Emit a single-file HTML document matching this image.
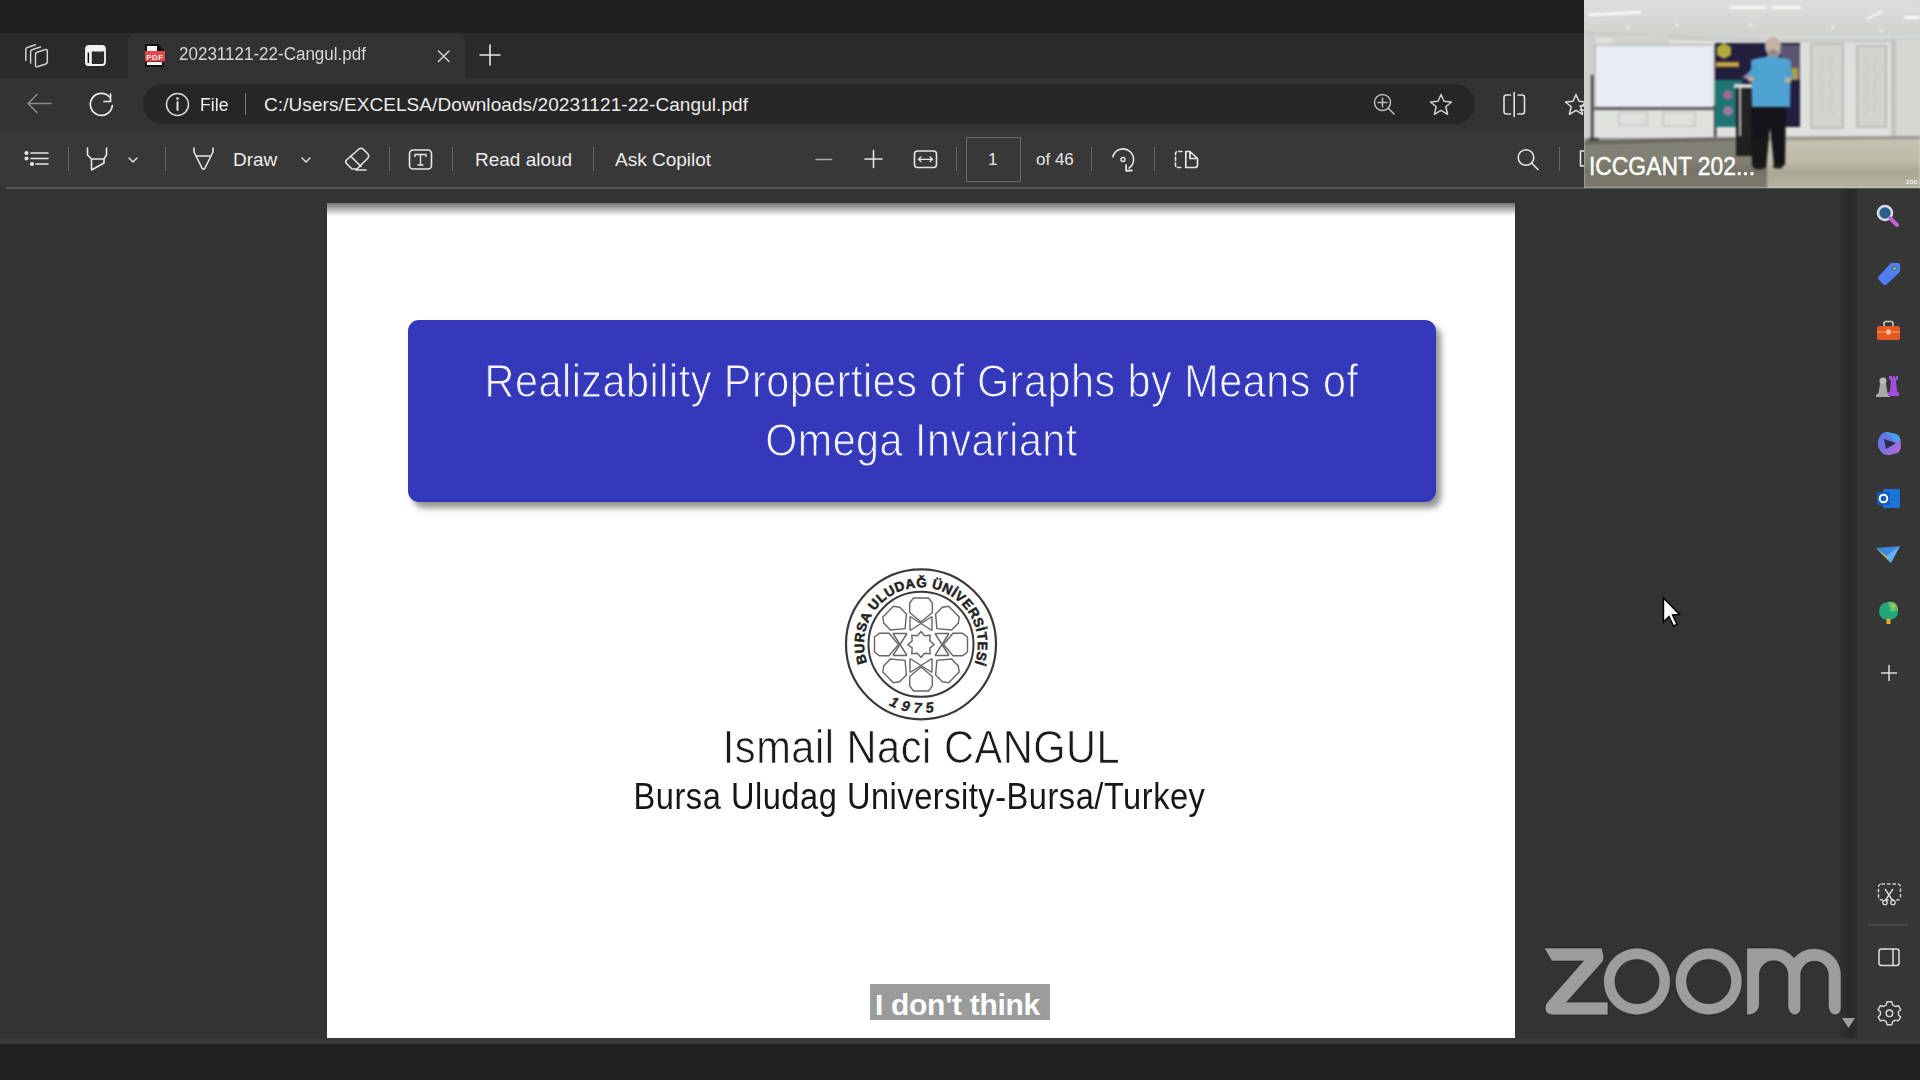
<!DOCTYPE html>
<html><head><meta charset="utf-8">
<style>
*{margin:0;padding:0;box-sizing:border-box}
html,body{width:1920px;height:1080px;overflow:hidden;background:#333;font-family:"Liberation Sans",sans-serif}
.abs{position:absolute}
#titlebar{left:0;top:0;width:1920px;height:33px;background:#1f1f1f}
#tabstrip{left:0;top:33px;width:1920px;height:45px;background:#2a2a2a}
#tab{left:128px;top:33px;width:337px;height:45px;background:#323232;border-radius:8px 8px 0 0}
#addrrow{left:0;top:78px;width:1920px;height:53px;background:#333333}
#pill{left:143px;top:84px;width:1332px;height:40px;background:#262626;border-radius:20px}
#toolrow{left:0;top:131px;width:1920px;height:57px;background:#383838}
#toolline{left:6px;top:187px;width:1914px;height:2px;background:#555555}
#main{left:0;top:189px;width:1920px;height:855px;background:#333}
#band{left:0;top:1038px;width:1920px;height:6px;background:#383838}
#sidebar{left:1857px;top:189px;width:63px;height:849px;background:#363636}
#sbshade{left:1838px;top:189px;width:19px;height:849px;background:linear-gradient(90deg,rgba(0,0,0,0),rgba(0,0,0,0.22) 70%,rgba(0,0,0,0.12))}
#bottom{left:0;top:1044px;width:1920px;height:36px;background:#212121}
#page{left:327px;top:203px;width:1188px;height:835px;background:#fff}
.t{position:absolute;color:#e6e6e6;white-space:nowrap;line-height:1}
.sep{position:absolute;width:1px;background:#666}
svg{position:absolute;overflow:visible}
#video{left:1584px;top:0;width:336px;height:188px;background:#d8d8d4;overflow:hidden}
#video svg{filter:blur(0.9px)}
#video svg.nb{filter:none}
.ctr{position:absolute;left:0;width:1843px;text-align:center;white-space:nowrap;line-height:1;transform-origin:921.5px 0}
</style></head><body>
<div id="titlebar" class="abs"></div>
<div id="tabstrip" class="abs"></div>
<div id="tab" class="abs"></div>
<div id="addrrow" class="abs"></div>
<div id="pill" class="abs"></div>
<div id="toolrow" class="abs"></div>
<div id="toolline" class="abs"></div>
<div id="main" class="abs"></div>
<div id="sbshade" class="abs"></div>
<div id="sidebar" class="abs"></div>
<div id="bottom" class="abs"></div>
<div id="band" class="abs"></div>
<div id="page" class="abs"><div style="position:absolute;left:0;top:0;width:100%;height:13px;background:linear-gradient(#707070,rgba(255,255,255,0))"></div></div>

<!-- tab strip content -->
<div class="t" style="left:179px;top:45px;font-size:18px;color:#d6d6d6;transform:scaleX(0.945);transform-origin:0 0">20231121-22-Cangul.pdf</div>
<div class="t" style="left:200px;top:94.5px;font-size:19px;color:#f0f0f0;transform:scaleX(0.93);transform-origin:0 0">File</div>
<div class="sep" style="left:245px;top:93px;height:22px;background:#777"></div>
<div class="t" style="left:264px;top:94.5px;font-size:19px;color:#ececec;letter-spacing:0.08px">C:/Users/EXCELSA/Downloads/20231121-22-Cangul.pdf</div>

<!-- toolbar text -->
<div class="t" style="left:233px;top:149.5px;font-size:19px;color:#ececec">Draw</div>
<div class="t" style="left:475px;top:149.5px;font-size:19px;color:#ececec">Read aloud</div>
<div class="t" style="left:615px;top:149.5px;font-size:19px;color:#ececec">Ask Copilot</div>
<div class="abs" style="left:966px;top:137px;width:55px;height:45px;border:1px solid #6a6a6a;background:#383838"></div>
<div class="t" style="left:988px;top:151px;font-size:17px">1</div>
<div class="t" style="left:1036px;top:151px;font-size:17px">of 46</div>
<div class="sep" style="left:68px;top:147px;height:24px"></div>
<div class="sep" style="left:165px;top:147px;height:24px"></div>
<div class="sep" style="left:389px;top:147px;height:24px"></div>
<div class="sep" style="left:452px;top:147px;height:24px"></div>
<div class="sep" style="left:593px;top:147px;height:24px"></div>
<div class="sep" style="left:956px;top:147px;height:24px"></div>
<div class="sep" style="left:1091px;top:147px;height:24px"></div>
<div class="sep" style="left:1154px;top:147px;height:24px"></div>
<div class="sep" style="left:1559px;top:147px;height:24px"></div>


<!-- slide -->
<div class="abs" style="left:407.5px;top:319.5px;width:1028px;height:182.5px;background:#3438bb;border-radius:11px;box-shadow:5px 6px 6px rgba(100,105,100,0.7)"></div>
<div class="ctr" style="top:356.8px;font-size:47px;color:#f4f4ff;transform:scaleX(0.879);letter-spacing:0.6px;-webkit-text-stroke:1px #3438bd">Realizability Properties of Graphs by Means of</div>
<div class="ctr" style="top:416.2px;font-size:47px;color:#f4f4ff;transform:scaleX(0.877);letter-spacing:0.6px;-webkit-text-stroke:1px #3438bd">Omega Invariant</div>
<div class="ctr" style="top:724.4px;font-size:46px;color:#1a1a1a;transform:scaleX(0.903);letter-spacing:0.6px;-webkit-text-stroke:0.7px #fff">Ismail Naci CANGUL</div>
<div class="ctr" style="top:778.8px;font-size:36.3px;color:#161616;transform:scaleX(0.897);left:-2px;letter-spacing:0.6px">Bursa Uludag University-Bursa/Turkey</div>

<svg class="abs" style="left:0;top:0" width="1920" height="1080">
<defs>
<path id="arcTop" d="M869.3,668.4 A57,57 0 1 1 970.4,672.8"/>
<path id="arcBot" d="M888.6,704.9 A69,69 0 0 0 953.4,704.9"/>
</defs>
<circle cx="921" cy="644.3" r="75" fill="none" stroke="#3a3a3a" stroke-width="2.2"/>
<circle cx="921" cy="644.3" r="52.5" fill="none" stroke="#3a3a3a" stroke-width="2"/>
<g fill="none" stroke="#666" stroke-width="1.4"><polygon points="921.0,622.0 932.3,612.5 932.3,603.0 928.5,598.0 913.5,598.0 909.7,603.0 909.7,612.5"/><polygon points="936.9,628.6 951.6,629.9 958.3,623.1 959.2,616.9 948.6,606.3 942.4,607.2 935.6,613.9"/><polygon points="943.5,644.5 953.0,655.8 962.5,655.8 967.5,652.0 967.5,637.0 962.5,633.2 953.0,633.2"/><polygon points="936.9,660.4 935.6,675.1 942.4,681.8 948.6,682.7 959.2,672.1 958.3,665.9 951.6,659.1"/><polygon points="921.0,667.0 909.7,676.5 909.7,686.0 913.5,691.0 928.5,691.0 932.3,686.0 932.3,676.5"/><polygon points="905.1,660.4 890.4,659.1 883.7,665.9 882.8,672.1 893.4,682.7 899.6,681.8 906.4,675.1"/><polygon points="898.5,644.5 889.0,633.2 879.5,633.2 874.5,637.0 874.5,652.0 879.5,655.8 889.0,655.8"/><polygon points="905.1,628.6 906.4,613.9 899.6,607.2 893.4,606.3 882.8,616.9 883.7,623.1 890.4,629.9"/><path d="M910.0,616.5 L910.0,630.5 M932.0,616.5 L932.0,630.5 M910.0,616.5 L932.0,630.5 M932.0,616.5 L910.0,630.5"/><path d="M949.0,633.5 L935.0,633.5 M949.0,655.5 L935.0,655.5 M949.0,633.5 L935.0,655.5 M949.0,655.5 L935.0,633.5"/><path d="M932.0,672.5 L932.0,658.5 M910.0,672.5 L910.0,658.5 M932.0,672.5 L910.0,658.5 M910.0,672.5 L932.0,658.5"/><path d="M893.0,655.5 L907.0,655.5 M893.0,633.5 L907.0,633.5 M893.0,655.5 L907.0,633.5 M893.0,633.5 L907.0,655.5"/><polygon points="921.0,631.5 924.6,635.7 930.2,635.3 929.8,640.9 934.0,644.5 929.8,648.1 930.2,653.7 924.6,653.3 921.0,657.5 917.4,653.3 911.8,653.7 912.2,648.1 908.0,644.5 912.2,640.9 911.8,635.3 917.4,635.7"/></g>
<text font-family="Liberation Sans" font-weight="bold" font-size="13.5" fill="#222" stroke="#222" stroke-width="0.5"><textPath href="#arcTop" startOffset="6" textLength="217" lengthAdjust="spacing">BURSA ULUDAĞ ÜNİVERSİTESİ</textPath></text>
<text font-family="Liberation Sans" font-weight="bold" font-style="italic" font-size="14.5" fill="#222" stroke="#222" stroke-width="0.3"><textPath href="#arcBot" textLength="47" lengthAdjust="spacing">1975</textPath></text>
</svg>

<!-- browser icons -->
<svg class="abs" style="left:0;top:0" width="1920" height="1080" fill="none" stroke="#dcdcdc" stroke-width="1.6" stroke-linecap="round" stroke-linejoin="round">
<!-- workspaces -->
<g stroke="#cfcfcf" stroke-width="1.5" fill="none">
<path d="M25.8,60.5 V49.5 Q25.8,48 27.3,47.5 L35.5,44.8"/>
<path d="M30.6,63 V51.8 Q30.6,50.3 32.1,49.8 L40.5,47"/>
<path d="M35.5,54.3 Q35.5,52.8 37,52.3 L45.5,49.5 Q47.3,49 47.3,50.7 V62 Q47.3,63.5 45.8,64 L37.3,66.8 Q35.5,67.3 35.5,65.6 Z" fill="#2a2a2a"/>
</g>
<!-- vertical tabs -->
<rect x="86" y="46" width="19" height="19" rx="3" stroke="#f2f2f2" stroke-width="1.8"/>
<rect x="86" y="46" width="19" height="5.5" rx="2" fill="#f2f2f2" stroke="none"/>
<rect x="85.5" y="50" width="6.3" height="15.5" rx="1.5" fill="#f2f2f2" stroke="none"/>
<rect x="87.6" y="52.5" width="1.5" height="10.5" fill="#111" stroke="none"/>
<!-- pdf icon -->
<g stroke="none">
<path d="M145,44 H158 L164,50 V67 H145 Z" fill="#111"/>
<rect x="147" y="46" width="10" height="5" fill="#f4f4f4"/>
<rect x="145" y="51" width="20" height="10.5" fill="#e0484b"/>
<rect x="147" y="62" width="15" height="3" fill="#f4f4f4"/>
<text x="155" y="59.5" font-family="Liberation Sans" font-weight="bold" font-size="8" fill="#ffe2e2" text-anchor="middle" letter-spacing="0.5">PDF</text>
</g>
<!-- close, plus -->
<path d="M438.5,51 L449,61.5 M449,51 L438.5,61.5" stroke="#d0d0d0" stroke-width="1.5"/>
<path d="M480,55 H500 M490,45 V65" stroke="#e8e8e8" stroke-width="1.6"/>
<!-- back -->
<path d="M28,103.5 H51 M28,103.5 L37,94.5 M28,103.5 L37,112.5" stroke="#8c8c8c" stroke-width="1.5"/>
<!-- refresh -->
<path d="M109.5,97 A11,11 0 1 0 112.3,105.5" stroke="#ececec" stroke-width="1.7"/>
<path d="M104,101.5 H110.5 V94" stroke="#ececec" stroke-width="1.7"/>
<!-- info -->
<circle cx="177.5" cy="104.5" r="11" stroke="#d8d8d8" stroke-width="1.5"/>
<path d="M177.5,102 V110" stroke="#e0e0e0" stroke-width="2"/>
<circle cx="177.5" cy="98.6" r="1.3" fill="#e0e0e0" stroke="none"/>
<!-- zoom in -->
<circle cx="1382.5" cy="102.5" r="8" stroke="#bdbdbd" stroke-width="1.5"/>
<path d="M1388.3,108.3 L1394,114 M1382.5,98 V107 M1378,102.5 H1387" stroke="#bdbdbd" stroke-width="1.5"/>
<!-- star -->
<path d="M1441,94.5 L1444,101.3 L1451.5,102 L1445.8,106.8 L1447.6,114.3 L1441,110.3 L1434.4,114.3 L1436.2,106.8 L1430.5,102 L1438,101.3 Z" stroke="#cfcfcf" stroke-width="1.5"/>
<!-- split screen -->
<path d="M1510.5,95 H1506.5 Q1504,95 1504,97.5 V111.5 Q1504,114 1506.5,114 H1510.5 M1518,95 H1522 Q1524.5,95 1524.5,97.5 V111.5 Q1524.5,114 1522,114 H1518 M1514.2,92.5 V116.5" stroke="#dedede" stroke-width="1.6"/>
<!-- favorites -->
<path d="M1576,94.5 L1579,101.3 L1586,102 L1580.8,106.8 L1582.6,114.3 L1576,110.3 L1569.4,114.3 L1571.2,106.8 L1565.5,102 L1573,101.3 Z" stroke="#dedede" stroke-width="1.5"/><path d="M1580,106 H1590 M1580,110 H1590" stroke="#dedede" stroke-width="1.4"/>

<!-- pdf toolbar -->
<g stroke="#e6e6e6" stroke-width="1.6">
<circle cx="26.5" cy="153" r="1.3" fill="#e6e6e6"/><circle cx="26.5" cy="158.5" r="1.3" fill="#e6e6e6"/><circle cx="32" cy="164" r="1.3" fill="#e6e6e6"/>
<path d="M31,153 H48 M31,158.5 H48 M36,164 H48"/>
<!-- highlighter -->
<path d="M87.5,148 V155 L91.5,159 H104 L106.5,155 V148 M91.5,159 V170 L104,163 V159"/>
<path d="M129,158 L133,162 L137,158" stroke-width="1.4"/>
<!-- draw pen -->
<path d="M194,148 V152 L202.5,169 L204.5,169 L213,152 V148 M196.5,156 H211" />
<path d="M302,158 L306,162 L310,158" stroke-width="1.4"/>
<!-- eraser -->
<path d="M359,149 Q361,147.5 363,149 L368,154 Q369.5,156 368,158 L357,169 H352 L346.5,163.5 Q345,161.5 346.5,160 Z M350.5,156 L361,166.5 M356,170 H366"/>
<!-- text box -->
<rect x="409.5" y="150" width="22" height="19" rx="3.5"/>
<path d="M415,154.5 H426 M420.5,154.5 V165 M418,165 H423 M415,154.5 V156.5 M426,154.5 V156.5" stroke-width="1.4"/>
<!-- zoom -->
<path d="M816,159.5 H831.5" stroke="#a8a8a8"/>
<path d="M865,159 H882 M873.5,150.5 V167.5"/>
<rect x="914.5" y="151" width="22" height="16.5" rx="3"/>
<path d="M918.5,159.3 H932.5 M918.5,159.3 L921,157 M918.5,159.3 L921,161.6 M932.5,159.3 L930,157 M932.5,159.3 L930,161.6" stroke-width="1.3"/>
<!-- rotate -->
<path d="M1112.9,156.8 A10.5,10.5 0 1 1 1129,168.1"/>
<path d="M1126,165.2 L1126.2,170.8 L1131.8,170.5" stroke-width="1.8"/>
<circle cx="1123" cy="159.5" r="2" stroke-width="1.4"/>
<!-- two pages -->
<path d="M1182,151.5 H1178 Q1175.5,151.5 1175.5,154 V165 Q1175.5,167.5 1178,167.5 H1182" stroke-dasharray="3.2 2.4"/>
<path d="M1185.8,151.5 H1190 L1197.5,158.5 V165 Q1197.5,167.5 1195,167.5 H1185.8 Z M1190,151.5 V158.5 H1197.5" stroke-width="1.7"/>
<!-- search -->
<circle cx="1526" cy="157.5" r="7.8"/>
<path d="M1531.8,163.3 L1538,169.5"/>
<path d="M1584,151 H1580.5 V166 H1584" />
</g>
</svg>

<div id="video" class="abs">
<svg width="336" height="188" style="left:0;top:0">
<defs>
<linearGradient id="ceil" x1="0" y1="0" x2="0" y2="1"><stop offset="0" stop-color="#dcdfdd"/><stop offset="1" stop-color="#cfd2cf"/></linearGradient>
<linearGradient id="floor" x1="0" y1="0" x2="0" y2="1"><stop offset="0" stop-color="#c6c3b3"/><stop offset="0.5" stop-color="#bebba9"/><stop offset="0.68" stop-color="#aaa894"/><stop offset="1" stop-color="#b7b4a1"/></linearGradient>
<linearGradient id="wall" x1="0" y1="0" x2="0" y2="1"><stop offset="0" stop-color="#dcdedb"/><stop offset="1" stop-color="#e2e3df"/></linearGradient>
</defs>
<rect x="0" y="0" width="336" height="188" fill="url(#wall)"/>
<rect x="0" y="0" width="336" height="36" fill="url(#ceil)"/>
<path d="M0,32 Q168,40 336,38 L336,42 Q168,44 0,36 Z" fill="#c9cbc7"/>
<g fill="#f8f8f8">
<rect x="4" y="12" width="53" height="3" rx="1" transform="rotate(-3 30 13)"/>
<rect x="145" y="6" width="38" height="3" rx="1"/><rect x="187" y="6" width="30" height="3" rx="1"/>
<rect x="320" y="16" width="16" height="3" rx="1"/>
<rect x="282" y="14" width="18" height="2" rx="1" transform="rotate(-25 291 15)"/>
<circle cx="44" cy="27" r="1.6"/><circle cx="93" cy="25" r="1.6"/><circle cx="167" cy="25" r="1.6"/><circle cx="249" cy="27" r="1.6"/><circle cx="297" cy="31" r="1.6"/>
</g>
<rect x="0" y="36" width="11" height="105" fill="#cfd0cc"/>
<rect x="30" y="36" width="55" height="10" fill="#d2d3cf"/>
<rect x="307" y="38" width="5" height="100" fill="#c4c5c0"/>
<rect x="312" y="40" width="24" height="100" fill="#d6d7d2"/>
<!-- lower wall panels -->
<rect x="35" y="112" width="28" height="13" fill="none" stroke="#b5b7b2" stroke-width="1"/>
<rect x="79" y="112" width="32" height="14" fill="none" stroke="#b5b7b2" stroke-width="1"/>
<!-- whiteboard -->
<rect x="11" y="45" width="119" height="63" fill="#e9ecf2" stroke="#a0a19e" stroke-width="1"/>
<rect x="10" y="107" width="121" height="3" fill="#5d5f5e"/>
<rect x="7" y="75" width="2.4" height="65" fill="#3c3c3c"/>
<rect x="130" y="105" width="2.4" height="45" fill="#3c3c3c"/>
<rect x="5" y="138" width="10" height="4" fill="#4a4a4a" rx="1"/>
<!-- wall panels right -->
<rect x="227" y="44" width="32" height="84" fill="#d3d4cf" stroke="#b3b4ae" stroke-width="1.5"/>
<rect x="273" y="46" width="29" height="81" fill="#d3d4cf" stroke="#b3b4ae" stroke-width="1.5"/>
<path d="M235,55 q8,10 0,20 q8,10 0,20 q8,10 0,20 M250,55 q-8,10 0,20 q-8,10 0,20 q-8,10 0,20" stroke="#c9cac5" fill="none" stroke-width="1.2"/>
<path d="M280,57 q8,10 0,20 q8,10 0,20 q8,10 0,20 M294,57 q-8,10 0,20 q-8,10 0,20 q-8,10 0,20" stroke="#c9cac5" fill="none" stroke-width="1.2"/>
<!-- floor -->
<path d="M0,141 L130,137 L336,136 L336,188 L0,188 Z" fill="url(#floor)"/>
<path d="M0,141 L130,137 L336,136 L336,139 L130,141 L0,145 Z" fill="#9a988c"/>
<!-- poster -->
<rect x="131" y="43" width="85" height="84" fill="#211f3c"/>
<path d="M158,78 L195,45 L206,45 L170,80 Z" fill="#a08cab"/>
<path d="M195,45 L216,45 L216,80 L200,70 Z" fill="#5d5670"/>
<rect x="131" y="80" width="27" height="47" fill="#1f7474"/>
<path d="M133,47 L140,43 L147,47 L147,55 L140,59 L133,55 Z" fill="#b4a83a"/>
<rect x="132" y="62" width="23" height="5" fill="#c6a23e"/>
<circle cx="144" cy="95" r="5" fill="#9a6a8a"/>
<circle cx="144" cy="111" r="5" fill="#9a7a9a"/>
<rect x="205" y="68" width="9" height="12" fill="#b89a40"/>
<!-- podium -->
<rect x="152" y="86" width="19" height="70" fill="#232323"/>
<rect x="150" y="84" width="23" height="4" fill="#d8d8d8"/>
<rect x="155" y="88" width="2" height="48" fill="#c8c8c8"/>
<!-- person -->
<path d="M167,60 Q187,53 207,60 L206,107 L168,108 Z" fill="#4fa3d2"/>
<path d="M170,64 L163,76 L166,80 L174,72 Z" fill="#4b9fd0"/>
<path d="M204,64 L210,77 L206,81 L200,72 Z" fill="#4b9fd0"/>
<ellipse cx="167" cy="79" rx="3.5" ry="2.8" fill="#c9a98e"/>
<ellipse cx="204" cy="80" rx="3.5" ry="2.8" fill="#c9a98e"/>
<path d="M167,107 L202,107 L201,165 L190,166 L186,128 L182,168 L168,166 Z" fill="#141418"/>
<ellipse cx="175" cy="167" rx="6" ry="2.5" fill="#1a1a1a"/><ellipse cx="194" cy="166" rx="5" ry="2.5" fill="#1a1a1a"/>
<ellipse cx="189" cy="46" rx="8" ry="11" fill="#c4b3a6"/>
<path d="M181,42 Q189,32 197,42 L197,38 Q189,30 181,38 Z" fill="#d9d9d4"/>
<ellipse cx="189" cy="53" rx="5" ry="3.5" fill="#948c84"/>
<!-- overlay -->
<rect x="0" y="138" width="183" height="50" fill="rgba(30,30,25,0.38)"/>


</svg>
<svg class="nb" width="336" height="188" style="left:0;top:0"><text x="5" y="175" font-family="Liberation Sans" font-size="25" fill="#fbfbf8" stroke="#fbfbf8" stroke-width="0.5" textLength="166" lengthAdjust="spacingAndGlyphs">ICCGANT 202...</text><text x="322" y="184" font-family="Liberation Sans" font-size="7" fill="#fff">zoo</text></svg>
</div>

<!-- sidebar icons -->
<svg class="abs" style="left:0;top:0" width="1920" height="1080">
<!-- search -->
<circle cx="1885" cy="213" r="7" fill="#2a5f8a" stroke="#d9dde3" stroke-width="2.6"/>
<path d="M1890.5,218.5 L1897,225" stroke="#c65bd6" stroke-width="4" stroke-linecap="round"/>
<!-- tag -->
<path d="M1879,276 L1891,263 L1898,263 Q1900,263 1900,265 L1900,272 L1887,284 Q1885,286 1883,284 L1879,280 Q1877,278 1879,276 Z" fill="#4f7ff0"/>
<circle cx="1894.5" cy="268.5" r="2" fill="#7fcf55" stroke="#2d4a9e" stroke-width="0.8"/>
<!-- toolbox -->
<path d="M1884,327 V323.5 Q1884,321.5 1886,321.5 H1891 Q1893,321.5 1893,323.5 V327" fill="none" stroke="#c9c9c9" stroke-width="1.6"/>
<rect x="1877" y="326" width="23" height="14" rx="2" fill="#e05a22"/>
<rect x="1877" y="331" width="23" height="2" fill="#f07d45"/>
<rect x="1886.5" y="329.5" width="4" height="5" fill="#f3c7a8"/>
<!-- chess -->
<circle cx="1883" cy="381" r="3.5" fill="#b9b9b9"/>
<path d="M1880,384 L1886,384 L1887.5,393 L1890,395 V397 H1876 V395 L1878.5,393 Z" fill="#a8a8a8"/>
<path d="M1889,376 V379 L1891,381 L1890,391 L1888,393 V396 H1899 V393 L1897,391 L1896,381 L1898,379 V376 H1896 V378 H1895 V376 H1893 V378 H1892 V376 Z" fill="#a24de0"/>
<!-- copilot -->
<defs><linearGradient id="cop" x1="0" y1="0" x2="1" y2="1"><stop offset="0" stop-color="#4a7ee8"/><stop offset="0.5" stop-color="#7b6ee0"/><stop offset="1" stop-color="#c86ad8"/></linearGradient></defs>
<path d="M1886,432 L1895,433.5 Q1900,435 1900.5,440 L1901,447 Q1900.5,451 1897,453 L1890,455 Q1885,455.5 1882,453 L1878.5,448 Q1877.5,445 1878,441 L1880,436 Q1882,432.5 1886,432 Z" fill="url(#cop)"/>
<path d="M1884,439 L1896,443 L1886,449 Z" fill="#2d2a4a"/>
<path d="M1886,432 L1895,433.5 Q1900,435 1900.5,440 L1896,443 Z" fill="#3fa8f0" opacity="0.8"/>
<!-- outlook -->
<rect x="1883" y="489" width="17" height="19" rx="1.5" fill="#1a73d6"/>
<rect x="1877" y="492" width="13" height="13" rx="1.5" fill="#0f5cbf"/>
<circle cx="1883.5" cy="498.5" r="3.8" fill="none" stroke="#ffffff" stroke-width="2"/>
<!-- paper plane -->
<path d="M1876,548 L1900,546 L1891,563 Z" fill="#3b86e0"/>
<path d="M1876,548 L1886,556 L1891,563 Z" fill="#f0c53a"/>
<path d="M1886,556 L1900,546 L1891,563 Z" fill="#60b0f0"/>
<!-- tree -->
<path d="M1888,602 Q1897,600 1898,610 Q1899,619 1889,620 Q1879,620 1879,611 Q1879,603 1888,602 Z" fill="#22a77a"/>
<path d="M1888,602 Q1897,600 1898,610 L1891,612 Z" fill="#5fc46a"/>
<rect x="1886.5" y="619" width="4" height="5" fill="#e8b030"/>
<circle cx="1893" cy="606" r="1.6" fill="#e8c040"/>
<!-- plus -->
<path d="M1881,673 H1897 M1889,665 V681" stroke="#dcdcdc" stroke-width="1.5"/>
<!-- screenshot -->
<rect x="1878.5" y="884" width="22" height="16" rx="3" fill="none" stroke="#cfcfcf" stroke-width="1.5" stroke-dasharray="3.5 2"/>
<path d="M1885,889 L1893,901 M1893,889 L1885,901" stroke="#d8d8d8" stroke-width="1.4"/>
<circle cx="1885" cy="902.5" r="2.2" fill="#333" stroke="#d8d8d8" stroke-width="1.3"/>
<circle cx="1893" cy="902.5" r="2.2" fill="#333" stroke="#d8d8d8" stroke-width="1.3"/>
<rect x="1868" y="924" width="40" height="1.8" fill="#4b4b4b"/>
<!-- panel -->
<rect x="1879" y="949" width="20" height="16.5" rx="2.5" fill="none" stroke="#dedede" stroke-width="1.5"/>
<path d="M1893,949 V965.5" stroke="#dedede" stroke-width="1.5"/>
<!-- gear -->
<g transform="translate(1889.4,1013.3)" fill="none" stroke="#d8d8d8" stroke-width="1.4" stroke-linejoin="round">
<path d="M-2.3,-11.5 L2.3,-11.5 L3.2,-8.4 L5.9,-6.8 L9,-7.6 L11.3,-3.6 L9,-1.5 L9,1.5 L11.3,3.6 L9,7.6 L5.9,6.8 L3.2,8.4 L2.3,11.5 L-2.3,11.5 L-3.2,8.4 L-5.9,6.8 L-9,7.6 L-11.3,3.6 L-9,1.5 L-9,-1.5 L-11.3,-3.6 L-9,-7.6 L-5.9,-6.8 L-3.2,-8.4 Z"/>
<circle r="3.3"/>
</g>
<!-- zoom logo -->
<g fill="#9d9d9d" stroke="#1e1e1e" stroke-width="1.2" stroke-opacity="0.6">
<path d="M1544,948 H1602 L1604,957 Q1604,961 1601,964 L1567,1002 H1608 V1015 H1553 Q1545,1015 1545,1008 Q1545,1004 1548,1001 L1583,961 H1551.5 Z"/>
<path d="M1637,948 A33.5,33.5 0 1 1 1636.9,948 Z M1637,959.5 A22,22 0 1 0 1637.1,959.5 Z" fill-rule="evenodd"/>
<path d="M1708.7,948 A33.5,33.5 0 1 1 1708.6,948 Z M1708.7,959.5 A22,22 0 1 0 1708.8,959.5 Z" fill-rule="evenodd"/>
<path d="M1746.6,1015 V948 H1773.6 A27,27 0 0 1 1794,957.3 A26.7,26.7 0 0 1 1814.5,948.3 A26.7,26.7 0 0 1 1841.2,975 V1008 Q1841.2,1015 1834,1015 Q1828.2,1013 1828.2,1005 V975 A13.7,13.7 0 0 0 1800.8,975 V1008 Q1800.8,1015 1794,1015 Q1787.8,1013 1787.8,1005 V975 A14.15,14.15 0 0 0 1759.5,975 V1003 Q1759.5,1015 1746.6,1015 Z"/>
<path d="M1842,1018 H1855 L1848.5,1028 Z" stroke="none"/>
</g>
</svg>

<!-- caption -->
<div class="abs" style="left:870px;top:984px;width:180px;height:36px;background:#9b9b9b"></div>
<div class="t" style="left:875px;top:990px;font-size:30px;font-weight:bold;color:#fff;letter-spacing:-0.3px">I don't think</div>

<!-- cursor -->
<svg class="abs" style="left:0;top:0" width="1920" height="1080">
<path d="M1663.5,598 V622 L1669,616.5 L1673.5,626 L1677,624.5 L1672.5,615 L1679.5,614.5 Z" fill="#fff" stroke="#000" stroke-width="1.4" stroke-linejoin="miter"/>
</svg>
</body></html>
